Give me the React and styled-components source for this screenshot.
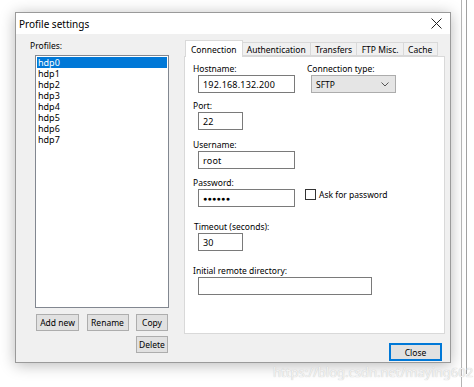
import styled, { createGlobalStyle } from 'styled-components';

const GlobalStyles = createGlobalStyle`
    html, body {
        margin: 0;
        padding: 0;
        background: #ffffff;
    }
    body {
        font-family: 'Noto Sans', 'Open Sans', sans-serif;
        font-size: 8.5px;
        color: #000000;
    }
`;

const profiles = ['hdp0', 'hdp1', 'hdp2', 'hdp3', 'hdp4', 'hdp5', 'hdp6', 'hdp7'];
const tabs = ['Connection', 'Authentication', 'Transfers', 'FTP Misc.', 'Cache'];

const CloseIcon = () => (
    <svg width="11" height="11" viewBox="0 0 11 11">
        <path d="M0.5 0.5 L10.5 10.5 M10.5 0.5 L0.5 10.5" stroke="#222" strokeWidth="1" fill="none" />
    </svg>
);

const Chevron = () => (
    <svg width="8" height="5" viewBox="0 0 8 5">
        <path d="M0.5 0.5 L4 4 L7.5 0.5" stroke="#555" strokeWidth="1" fill="none" />
    </svg>
);

const App = () => {
    return (
        <>
            <GlobalStyles />
            <Page>
                <Dialog>
                    <TitleBar>
                        <Title>Profile settings</Title>
                        <CloseIcon />
                    </TitleBar>
                    <Body>
                        <LeftCol>
                            <GroupLabel>Profiles:</GroupLabel>
                            <ProfileList>
                                {profiles.map((p, i) => (
                                    <ProfileItem key={p} $selected={i === 0}>
                                        {p}
                                    </ProfileItem>
                                ))}
                            </ProfileList>
                            <ButtonGrid>
                                <Button $w={43}>Add new</Button>
                                <Button $w={42}>Rename</Button>
                                <Button $w={32}>Copy</Button>
                                <Button $w={32} $col={3}>
                                    Delete
                                </Button>
                            </ButtonGrid>
                        </LeftCol>
                        <RightCol>
                            <TabRow>
                                {tabs.map((t, i) => (
                                    <Tab key={t} $active={i === 0}>
                                        {t}
                                    </Tab>
                                ))}
                            </TabRow>
                            <Panel>
                                <FieldRow>
                                    <Field>
                                        <FieldLabel>Hostname:</FieldLabel>
                                        <TextBox $w={97}>192.168.132.200</TextBox>
                                    </Field>
                                    <Field $ml={12}>
                                        <FieldLabel>Connection type:</FieldLabel>
                                        <Select>
                                            <span>SFTP</span>
                                            <Chevron />
                                        </Select>
                                    </Field>
                                </FieldRow>
                                <Field $mt={7}>
                                    <FieldLabel>Port:</FieldLabel>
                                    <TextBox $w={45}>22</TextBox>
                                </Field>
                                <Field $mt={9}>
                                    <FieldLabel>Username:</FieldLabel>
                                    <TextBox $w={97}>root</TextBox>
                                </Field>
                                <FieldRow $mt={8}>
                                    <Field>
                                        <FieldLabel>Password:</FieldLabel>
                                        <TextBox $w={97} $dots>
                                            ●●●●●●
                                        </TextBox>
                                    </Field>
                                    <CheckLine>
                                        <CheckBox />
                                        <span>Ask for password</span>
                                    </CheckLine>
                                </FieldRow>
                                <Field $mt={14}>
                                    <FieldLabel $indent={1}>Timeout (seconds):</FieldLabel>
                                    <TextBox $w={45}>30</TextBox>
                                </Field>
                                <Field $mt={14}>
                                    <FieldLabel>Initial remote directory:</FieldLabel>
                                    <TextBox $w={174} />
                                </Field>
                            </Panel>
                            <Footer>
                                <CloseButton>Close</CloseButton>
                            </Footer>
                        </RightCol>
                    </Body>
                </Dialog>
                <BackWindow>
                    <BackFrame />
                </BackWindow>
                <Watermark>https://blog.csdn.net/maying602</Watermark>
            </Page>
        </>
    );
};

export default App;

const Page = styled.div`
    position: relative;
    display: flex;
    width: 474px;
    height: 387px;
    overflow: hidden;
    background: #ffffff;
`;

const Dialog = styled.div`
    display: flex;
    flex-direction: column;
    width: 434px;
    height: 349px;
    margin: 12px 0 0 15px;
    border: 1px solid #9a9a9a;
    background: #f0f0f0;
    box-shadow: 0 2px 14px rgba(0, 0, 0, 0.28);
`;

const TitleBar = styled.div`
    display: flex;
    align-items: center;
    justify-content: space-between;
    height: 21px;
    padding: 0 8px 0 3px;
    background: #ffffff;
`;

const Title = styled.span`
    font-size: 10px;
    color: #000;
`;

const Body = styled.div`
    display: flex;
    flex: 1;
    padding: 5px 0 0 14px;
`;

const LeftCol = styled.div`
    display: flex;
    flex-direction: column;
    width: 139px;
`;

const GroupLabel = styled.div`
    height: 15px;
    line-height: 11px;
    padding-top: 1px;
    box-sizing: border-box;
    margin-bottom: 1px;
`;

const ProfileList = styled.div`
    display: flex;
    flex-direction: column;
    width: 134px;
    height: 253px;
    margin-left: 5px;
    padding: 1px;
    box-sizing: border-box;
    background: #ffffff;
    border: 1px solid #828790;
`;

const ProfileItem = styled.div`
    height: 11px;
    line-height: 11px;
    padding-left: 1px;
    font-size: 9px;
    background: ${({ $selected }) => ($selected ? '#0078d7' : 'transparent')};
    color: ${({ $selected }) => ($selected ? '#ffffff' : '#000000')};
`;

const ButtonGrid = styled.div`
    display: grid;
    grid-template-columns: 43px 42px 32px;
    column-gap: 7.5px;
    row-gap: 5px;
    margin: 6px 0 0 6px;
`;

const Button = styled.div`
    grid-column: ${({ $col }) => $col || 'auto'};
    width: ${({ $w }) => $w}px;
    height: 17px;
    box-sizing: border-box;
    display: flex;
    align-items: center;
    justify-content: center;
    background: #e1e1e1;
    border: 1px solid #adadad;
    white-space: nowrap;
`;

const RightCol = styled.div`
    display: flex;
    flex-direction: column;
    margin-left: 15px;
    width: 261px;
`;

const TabRow = styled.div`
    display: flex;
    align-items: flex-end;
    height: 17px;
    padding-left: 1px;
`;

const Tab = styled.div`
    height: ${({ $active }) => ($active ? 17 : 14)}px;
    box-sizing: border-box;
    padding: 0 ${({ $active }) => ($active ? 5 : 4.25)}px;
    display: flex;
    align-items: center;
    background: ${({ $active }) => ($active ? '#ffffff' : '#f0f0f0')};
    border: 1px solid #d9d9d9;
    border-bottom: ${({ $active }) => ($active ? 'none' : '1px solid #d9d9d9')};
    margin-left: ${({ $active }) => ($active ? 0 : -1)}px;
    margin-bottom: ${({ $active }) => ($active ? -1 : 0)}px;
    position: relative;
    z-index: ${({ $active }) => ($active ? 1 : 0)};
    white-space: nowrap;
`;

const Panel = styled.div`
    display: flex;
    flex-direction: column;
    height: 278px;
    box-sizing: border-box;
    padding: 6px 0 0 8px;
    background: #ffffff;
    border: 1px solid #d9d9d9;
`;

const FieldRow = styled.div`
    display: flex;
    align-items: flex-start;
    margin-top: ${({ $mt }) => $mt || 0}px;
`;

const Field = styled.div`
    display: flex;
    flex-direction: column;
    margin-top: ${({ $mt }) => $mt || 0}px;
    margin-left: ${({ $ml }) => $ml || 0}px;
`;

const FieldLabel = styled.div`
    height: 12px;
    line-height: 11px;
    padding-left: ${({ $indent }) => $indent || 0}px;
`;

const TextBox = styled.div`
    width: ${({ $w }) => $w}px;
    height: 18px;
    box-sizing: border-box;
    margin-left: 5px;
    padding-left: 4px;
    display: flex;
    align-items: center;
    background: #ffffff;
    border: 1px solid #7a7a7a;
    font-size: ${({ $dots }) => ($dots ? '7px' : '9px')};
    letter-spacing: ${({ $dots }) => ($dots ? '0.3px' : '0.2px')};
`;

const Select = styled.div`
    width: 85px;
    height: 18px;
    box-sizing: border-box;
    margin-left: 4px;
    padding: 0 6px 0 4px;
    display: flex;
    align-items: center;
    justify-content: space-between;
    background: #e5e5e5;
    border: 1px solid #acacac;
`;

const CheckLine = styled.div`
    display: flex;
    align-items: center;
    gap: 3px;
    margin: 12px 0 0 10px;
`;

const CheckBox = styled.span`
    width: 11px;
    height: 11px;
    box-sizing: border-box;
    background: #ffffff;
    border: 1px solid #333333;
`;

const Footer = styled.div`
    display: flex;
    justify-content: flex-end;
    padding: 9px 3px 0 0;
`;

const CloseButton = styled.div`
    width: 53px;
    height: 18px;
    box-sizing: border-box;
    display: flex;
    align-items: center;
    justify-content: center;
    background: #e1e1e1;
    border: 2px solid #0078d7;
`;

const BackWindow = styled.div`
    display: flex;
    margin-left: 10px;
    height: 100%;
    border-left: 1px solid #b4b4b4;
`;

const BackFrame = styled.div`
    width: 100%;
    height: 373px;
    margin-left: 4px;
    border-left: 1px solid #a0a0a0;
    border-bottom: 1px solid #a0a0a0;
    box-shadow: inset 1px 0 0 #e0e0e0;
`;

const Watermark = styled.div`
    position: absolute;
    left: 273px;
    top: 363px;
    font-family: 'Noto Sans', sans-serif;
    font-size: 13px;
    color: #f3f3f3;
    text-shadow: 0 0 1px #b8b8b8;
    white-space: nowrap;
`;
